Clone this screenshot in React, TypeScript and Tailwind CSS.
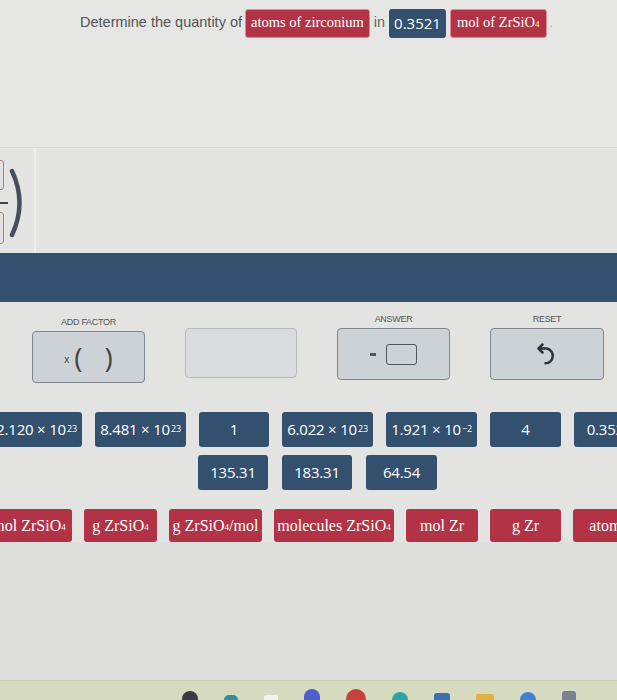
import React from "react";

const sans = { fontFamily: '"Liberation Sans", Arial, sans-serif' };

function Sup({ children }: { children: React.ReactNode }) {
  return <sup className="text-[9px] relative -top-[1px] ml-[1px]">{children}</sup>;
}

function Num({ w, children }: { w: string; children: React.ReactNode }) {
  return (
    <div
      className={`${w} h-[35px] shrink-0 rounded-[3px] bg-[#34506f] text-white text-[15px] tracking-[-0.2px] flex items-center justify-center whitespace-nowrap`}
      style={{ fontFamily: '"Open Sans", sans-serif' }}
    >
      {children}
    </div>
  );
}

function Red({ w, children }: { w: string; children: React.ReactNode }) {
  return (
    <div
      className={`${w} h-[33px] shrink-0 rounded-[3px] bg-[#b23345] text-white text-[16px] flex items-center justify-center whitespace-nowrap`}
      style={{ fontFamily: '"Liberation Serif", "Times New Roman", serif' }}
    >
      {children}
    </div>
  );
}

function Sub() {
  return <sub className="text-[9px] relative top-[1px]">4</sub>;
}

export default function App() {
  return (
    <div className="w-[617px] h-[700px] overflow-hidden bg-[#e3e3e1] flex flex-col" style={sans}>
      {/* question area */}
      <div className="h-[148px] shrink-0 bg-[#e6e6e4] border-b border-[#d8d8d6]">
        <div className="flex items-center pl-[80px] pt-[8px] h-[38px] text-[14.5px] text-[#555]">
          <span>Determine the quantity of</span>
          <span
            className="ml-[3px] h-[29px] px-[5px] flex items-center rounded-[3px] bg-[#b23345] border border-[#d98c96] text-white text-[14.5px]"
            style={{ fontFamily: '"Liberation Serif", serif' }}
          >
            atoms of zirconium
          </span>
          <span className="ml-[4px] mr-[4px] text-[#666]">in</span>
          <span className="h-[29px] px-[5px] flex items-center rounded-[3px] bg-[#34506f] text-white text-[15px]" style={{ fontFamily: '"Open Sans", sans-serif' }}>
            0.3521
          </span>
          <span
            className="ml-[4px] h-[29px] px-[6px] flex items-center rounded-[3px] bg-[#b23345] border border-[#d98c96] text-white text-[14.5px]"
            style={{ fontFamily: '"Liberation Serif", serif' }}
          >
            mol of ZrSiO<Sub />
          </span>
          <span className="ml-[3px] text-[#aaa] text-[12px]">.</span>
        </div>
      </div>

      {/* workspace */}
      <div className="h-[105px] shrink-0 flex bg-[#e4e4e2]">
        <div className="w-[36px] h-full border-r-2 border-[#efefed] relative">
          <div className="absolute left-[-10px] top-[12px] w-[14px] h-[30px] border border-[#a58474] rounded-[3px]" />
          <div className="absolute left-[-10px] top-[64px] w-[14px] h-[32px] border border-[#a58474] rounded-[3px]" />
          <div className="absolute left-0 top-[54px] w-[8px] h-[2px] bg-[#444]" />
          <svg className="absolute left-[8px] top-[20px]" width="20" height="70" viewBox="0 0 20 70">
            <path d="M4 3 Q19 35 4 67" stroke="#4b4e5a" strokeWidth="4.5" fill="none" strokeLinecap="round" />
          </svg>
        </div>
        <div className="flex-1" />
      </div>

      {/* blue bar */}
      <div className="h-[49px] shrink-0 bg-[#33506f]" />

      {/* controls */}
      <div className="flex pl-[32px] gap-[40px] pt-[12px]">
        <div className="w-[113px] flex flex-col items-center">
          <div className="h-[11px] text-[9px] leading-[11px] text-[#555] tracking-[-0.3px] mt-[3px]">ADD FACTOR</div>
          <div className="mt-[3px] w-[113px] h-[52px] rounded-[4px] bg-[#cdd2d6] border-[1.5px] border-[#80878e] flex items-center justify-center text-[#444]">
            <span className="text-[10px] mt-[4px] mr-[5px]">x</span>
            <span className="text-[28px]" style={{ fontFamily: '"Open Sans", sans-serif' }}>(</span>
            <span className="w-[22px]" />
            <span className="text-[28px]" style={{ fontFamily: '"Open Sans", sans-serif' }}>)</span>
          </div>
        </div>
        <div className="w-[112px] flex flex-col items-center">
          <div className="h-[11px]" />
          <div className="mt-[3px] w-[112px] h-[50px] rounded-[4px] bg-[#dadbdc] border border-[#b9bbbd]" />
        </div>
        <div className="w-[113px] flex flex-col items-center">
          <div className="h-[11px] text-[9px] leading-[11px] text-[#555] tracking-[-0.3px]">ANSWER</div>
          <div className="mt-[3px] w-[113px] h-[52px] rounded-[4px] bg-[#cdd2d6] border-[1.5px] border-[#80878e] flex items-center justify-center gap-[10px]">
            <div className="w-[6px] h-[3px] bg-[#555]" />
            <div className="w-[31px] h-[21px] rounded-[3px] border-[1.5px] border-[#555]" />
          </div>
        </div>
        <div className="w-[114px] flex flex-col items-center">
          <div className="h-[11px] text-[9px] leading-[11px] text-[#555] tracking-[-0.3px]">RESET</div>
          <div className="mt-[3px] w-[114px] h-[52px] rounded-[4px] bg-[#cdd2d6] border-[1.5px] border-[#80878e] flex items-center justify-center">
            <svg width="26" height="24" viewBox="0 0 26 24">
              <path d="M8.5 2.5 L4.5 6.5 L8.5 10.5" stroke="#333" strokeWidth="2.5" fill="none" strokeLinecap="round" strokeLinejoin="round" />
              <path d="M5 6.5 H13 A7.5 7.5 0 0 1 11.5 21.3" stroke="#333" strokeWidth="2.5" fill="none" strokeLinecap="round" />
            </svg>
          </div>
        </div>
      </div>

      {/* number tiles */}
      <div className="flex gap-[13px] -ml-[9px] mt-[29px]">
        <Num w="w-[91px]">2.120 × 10<Sup>23</Sup></Num>
        <Num w="w-[91px]">8.481 × 10<Sup>23</Sup></Num>
        <Num w="w-[70px]">1</Num>
        <Num w="w-[91px]">6.022 × 10<Sup>23</Sup></Num>
        <Num w="w-[91px]">1.921 × 10<Sup>−2</Sup></Num>
        <Num w="w-[71px]">4</Num>
        <Num w="w-[71px]">0.3521</Num>
      </div>
      <div className="flex gap-[14px] pl-[198px] mt-[8px]">
        <Num w="w-[70px]">135.31</Num>
        <Num w="w-[70px]">183.31</Num>
        <Num w="w-[71px]">64.54</Num>
      </div>

      {/* unit tiles */}
      <div className="flex gap-[12px] -ml-[14px] mt-[19px]">
        <Red w="w-[86px]">mol ZrSiO<Sub /></Red>
        <Red w="w-[73px]">g ZrSiO<Sub /></Red>
        <Red w="w-[93px]">g ZrSiO<Sub />/mol</Red>
        <Red w="w-[120px]">molecules ZrSiO<Sub /></Red>
        <Red w="w-[72px]">mol Zr</Red>
        <Red w="w-[71px]">g Zr</Red>
        <Red w="w-[90px]">atoms Zr</Red>
      </div>

      <div className="flex-1 bg-[#dededc]" />

      {/* taskbar strip */}
      <div className="h-[20px] shrink-0 bg-[#d6dabf] border-t border-[#c8ccb0] flex items-end pl-[182px] gap-[26px] overflow-hidden">
        <div className="w-[16px] h-[9px] rounded-t-full bg-[#3a3a40]" />
        <div className="w-[14px] h-[5px] rounded-t-full bg-[#2e8fa0]" />
        <div className="w-[14px] h-[5px] rounded-t-[2px] bg-[#f2f2f0]" />
        <div className="w-[16px] h-[11px] rounded-t-full bg-[#4b5fd0]" />
        <div className="w-[20px] h-[11px] rounded-t-full bg-[#c94040]" />
        <div className="w-[16px] h-[8px] rounded-t-full bg-[#2aa5a5]" />
        <div className="w-[16px] h-[7px] rounded-t-[3px] bg-[#3c70b0]" />
        <div className="w-[18px] h-[6px] rounded-t-[2px] bg-[#e0b040]" />
        <div className="w-[16px] h-[8px] rounded-t-full bg-[#4080d0]" />
        <div className="w-[14px] h-[9px] rounded-t-[3px] bg-[#7a8090]" />
      </div>
    </div>
  );
}
